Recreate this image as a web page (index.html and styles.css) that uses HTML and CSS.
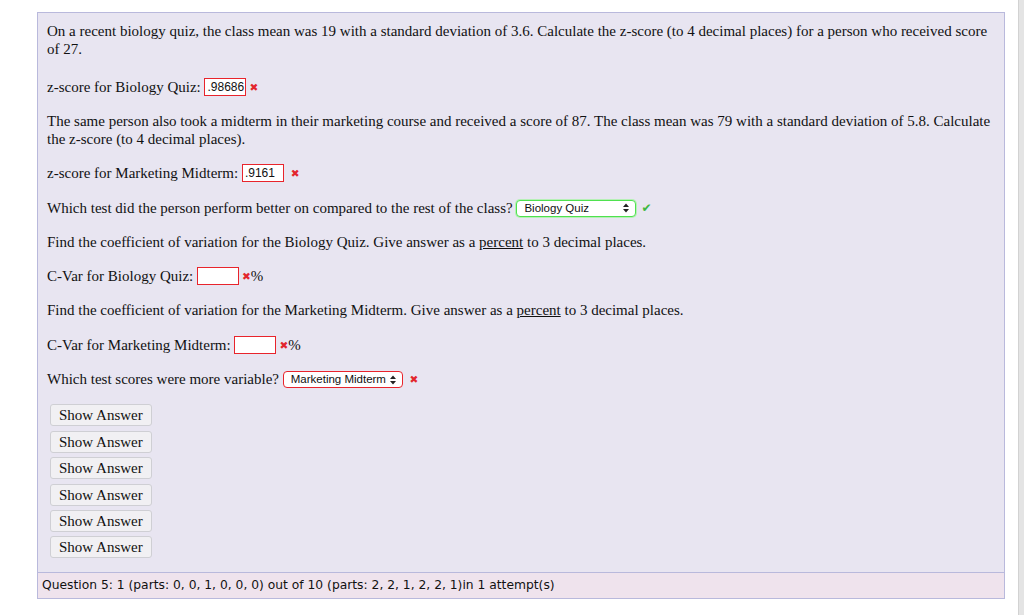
FILE: index.html
```html
<!DOCTYPE html>
<html>
<head>
<meta charset="utf-8">
<link rel="stylesheet" href="styles.css">
</head>
<body>
<div class="page">
  <div class="question">
    <div class="qbody">
      <p>On a recent biology quiz, the class mean was 19 with a standard deviation of 3.6. Calculate the z-score (to 4 decimal places) for a person who received score of 27.</p>
      <p class="row first-row">z-score for Biology Quiz: <span class="input wrong">.98686</span><span class="mark-x">✖</span></p>
      <p>The same person also took a midterm in their marketing course and received a score of 87. The class mean was 79 with a standard deviation of 5.8. Calculate the z-score (to 4 decimal places).</p>
      <p class="row">z-score for Marketing Midterm: <span class="input wrong">.9161</span> <span class="mark-x">✖</span></p>
      <p class="row">Which test did the person perform better on compared to the rest of the class? <span class="select right">Biology Quiz<svg class="arrows" viewBox="0 0 6 10" width="6" height="10"><path d="M0 4 L3 0.5 L6 4 Z M0 6 L3 9.5 L6 6 Z" fill="#222"/></svg></span><span class="mark-ok">✔</span></p>
      <p>Find the coefficient of variation for the Biology Quiz. Give answer as a <u>percent</u> to 3 decimal places.</p>
      <p class="row">C-Var for Biology Quiz: <span class="input wrong"></span><span class="mark-x">✖</span>%</p>
      <p>Find the coefficient of variation for the Marketing Midterm. Give answer as a <u>percent</u> to 3 decimal places.</p>
      <p class="row">C-Var for Marketing Midterm: <span class="input wrong"></span><span class="mark-x">✖</span>%</p>
      <p class="row">Which test scores were more variable? <span class="select wrong-sel">Marketing Midterm<svg class="arrows" viewBox="0 0 6 10" width="6" height="10"><path d="M0 4 L3 0.5 L6 4 Z M0 6 L3 9.5 L6 6 Z" fill="#222"/></svg></span> <span class="mark-x">✖</span></p>
      <div class="buttons">
        <button class="btn">Show Answer</button>
        <button class="btn">Show Answer</button>
        <button class="btn">Show Answer</button>
        <button class="btn">Show Answer</button>
        <button class="btn">Show Answer</button>
        <button class="btn">Show Answer</button>
      </div>
    </div>
    <div class="qfooter">Question 5: 1 (parts: 0, 0, 1, 0, 0, 0) out of 10 (parts: 2, 2, 1, 2, 2, 1)in 1 attempt(s)</div>
  </div>
  <div class="scrollbar"></div>
</div>
</body>
</html>
```

FILE: styles.css
```css
html, body {
  margin: 0;
  padding: 0;
  background: #ffffff;
}

.page {
  width: 1024px;
  height: 615px;
  position: relative;
  overflow: hidden;
}

.scrollbar {
  position: absolute;
  right: 0;
  top: 0;
  width: 5px;
  height: 615px;
  background: #e4e4e4;
  border-left: 1px solid #d2d2d2;
}

.question {
  margin: 12px 0 0 37px;
  width: 966px;
  border: 1px solid #b9b9dc;
  background: #e8e5f1;
}

.qbody {
  padding: 9px 5px 14px 9px;
  font-family: "Liberation Serif", "Times New Roman", serif;
  font-size: 15px;
  line-height: 18px;
  color: #111;
}

.qbody p {
  margin: 0 0 16.3px 0;
}

.row {
  display: block;
  height: 18px;
}

.qbody p.first-row {
  margin-top: 19.7px;
}

.input {
  display: inline-block;
  box-sizing: border-box;
  width: 42px;
  height: 18px;
  vertical-align: top;
  background: #fff;
  font-family: "Liberation Sans", Arial, sans-serif;
  font-size: 12px;
  line-height: 16px;
  padding: 0 2px;
  color: #111;
}

.input.wrong {
  border: 1px solid #e8242c;
}

.mark-x {
  color: #e3262d;
  font-family: "DejaVu Sans", sans-serif;
  font-size: 10.5px;
  margin-left: 3px;
  vertical-align: top;
}

.mark-ok {
  color: #3fb83f;
  font-family: "DejaVu Sans", sans-serif;
  font-size: 12px;
  margin-left: 5px;
  vertical-align: top;
}

.select {
  display: inline-flex;
  align-items: center;
  justify-content: space-between;
  box-sizing: border-box;
  width: 120px;
  height: 17px;
  padding: 0 6px 0 7px;
  vertical-align: top;
  margin-top: 1px;
  background: #fff;
  border-radius: 4px;
  font-family: "Liberation Sans", Arial, sans-serif;
  font-size: 11.5px;
  line-height: 15px;
  color: #111;
}

.select.right {
  border: 1px solid #4fe14f;
  box-shadow: 0 0 0 1px #b6f0b6;
}

.select.wrong-sel {
  border: 1px solid #e8242c;
}

.arrows {
  flex: none;
}

.buttons {
  display: flex;
  flex-direction: column;
  align-items: flex-start;
  gap: 4.4px;
  padding-left: 3px;
  margin-top: 13px;
}

.btn {
  font-family: "Liberation Serif", "Times New Roman", serif;
  font-size: 15px;
  line-height: 18px;
  height: 22px;
  padding: 0 8px;
  white-space: nowrap;
  background: #f1f0f3;
  border: 1px solid #cfcfd4;
  border-radius: 3px;
  color: #111;
}

.qfooter {
  border-top: 1px solid #b9b9dc;
  background: #efe3ed;
  font-family: "DejaVu Sans", Verdana, sans-serif;
  font-size: 12.3px;
  line-height: 25px;
  padding-left: 4px;
  color: #111;
}
```
